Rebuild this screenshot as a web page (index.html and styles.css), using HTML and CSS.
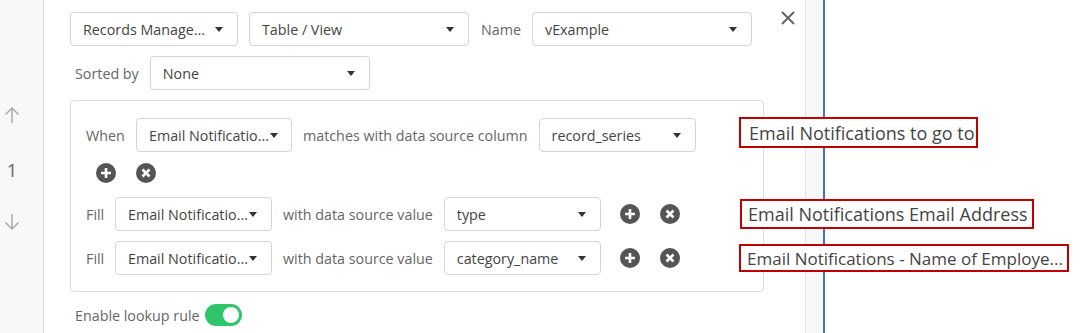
FILE: index.html
```html
<!DOCTYPE html>
<html>
<head>
<meta charset="utf-8">
<link rel="stylesheet" href="styles.css">
</head>
<body>
<div class="page">
  <div class="gutter">
    <svg class="arrow up" width="16" height="18" viewBox="0 0 16 18"><path d="M8 17V2M1.5 8.5L8 2l6.5 6.5" fill="none" stroke="#aaa" stroke-width="1.5"/></svg>
    <div class="index">1</div>
    <svg class="arrow down" width="16" height="18" viewBox="0 0 16 18"><path d="M8 1v15M1.5 9.5L8 16l6.5-6.5" fill="none" stroke="#aaa" stroke-width="1.5"/></svg>
  </div>
  <div class="main">
    <div class="row top">
      <div class="select w168"><span class="val">Records Manage...</span><span class="caret"></span></div>
      <div class="select w220"><span class="val">Table / View</span><span class="caret"></span></div>
      <span class="lbl">Name</span>
      <div class="select w220"><span class="val">vExample</span><span class="caret"></span></div>
      <svg class="close" width="16" height="16" viewBox="0 0 16 16"><path d="M2 2l12 12M14 2L2 14" stroke="#666" stroke-width="2"/></svg>
    </div>
    <div class="row sorted">
      <span class="lbl">Sorted by</span>
      <div class="select w220"><span class="val">None</span><span class="caret"></span></div>
    </div>
    <div class="box">
      <div class="row">
        <span class="lbl lw50">When</span>
        <div class="select w156 tight"><span class="val">Email Notificatio...</span><span class="caret"></span></div>
        <span class="lbl">matches with data source column</span>
        <div class="select w157"><span class="val">record_series</span><span class="caret"></span></div>
      </div>
      <div class="icons">
        <span class="circ"><svg width="20" height="20" viewBox="0 0 20 20"><circle cx="10" cy="10" r="10" fill="#555"/><path d="M10 5v10M5 10h10" stroke="#fff" stroke-width="2.6"/></svg></span>
        <span class="circ"><svg width="20" height="20" viewBox="0 0 20 20"><circle cx="10" cy="10" r="10" fill="#555"/><path d="M6.5 6.5l7 7M13.5 6.5l-7 7" stroke="#fff" stroke-width="2.6"/></svg></span>
      </div>
      <div class="row fill">
        <span class="lbl lw29">Fill</span>
        <div class="select w157 tight"><span class="val">Email Notificatio...</span><span class="caret"></span></div>
        <span class="lbl">with data source value</span>
        <div class="select w157"><span class="val">type</span><span class="caret"></span></div>
        <span class="circ c1"><svg width="20" height="20" viewBox="0 0 20 20"><circle cx="10" cy="10" r="10" fill="#555"/><path d="M10 5v10M5 10h10" stroke="#fff" stroke-width="2.6"/></svg></span>
        <span class="circ c2"><svg width="20" height="20" viewBox="0 0 20 20"><circle cx="10" cy="10" r="10" fill="#555"/><path d="M6.5 6.5l7 7M13.5 6.5l-7 7" stroke="#fff" stroke-width="2.6"/></svg></span>
      </div>
      <div class="row fill2">
        <span class="lbl lw29">Fill</span>
        <div class="select w157 tight"><span class="val">Email Notificatio...</span><span class="caret"></span></div>
        <span class="lbl">with data source value</span>
        <div class="select w157"><span class="val">category_name</span><span class="caret"></span></div>
        <span class="circ c1"><svg width="20" height="20" viewBox="0 0 20 20"><circle cx="10" cy="10" r="10" fill="#555"/><path d="M10 5v10M5 10h10" stroke="#fff" stroke-width="2.6"/></svg></span>
        <span class="circ c2"><svg width="20" height="20" viewBox="0 0 20 20"><circle cx="10" cy="10" r="10" fill="#555"/><path d="M6.5 6.5l7 7M13.5 6.5l-7 7" stroke="#fff" stroke-width="2.6"/></svg></span>
      </div>
    </div>
    <div class="enable">
      <span class="lbl">Enable lookup rule</span>
      <span class="toggle"><span class="knob"></span></span>
    </div>
  </div>
  <div class="strip"></div>
  <div class="blue"></div>
  <div class="rest"></div>

  <div class="note n1">Email Notifications to go to</div>
  <div class="note n2">Email Notifications Email Address</div>
  <div class="note n3">Email Notifications - Name of Employe...</div>
</div>
</body>
</html>
```
FILE: styles.css
```css
* { box-sizing: border-box; }
html, body { margin: 0; padding: 0; background: #fff; }
body { font-family: "Open Sans", "Liberation Sans", sans-serif; font-size: 14.3px; color: #444; }

.page { position: relative; display: flex; height: 333px; overflow: hidden; }

.gutter {
  width: 44px; flex: none; background: #f8f8f8; border-right: 1px solid #dcdcdc;
  display: flex; flex-direction: column; align-items: flex-start; padding-left: 4px;
}
.arrow { display: block; }
.arrow.up { margin-top: 106px; }
.index { margin-top: 34px; font-size: 18.5px; color: #666; line-height: 24px; width: 16px; text-align: center; }
.arrow.down { margin-top: 31px; }

.main { width: 761px; flex: none; padding: 12px 0 0 26px; position: relative; }
.strip { width: 18px; flex: none; background: #f8f8f8; border-left: 1px solid #e2e2e2; }
.blue { width: 2px; flex: none; background: #4472c4; }
.rest { flex: 1; background: #fff; }

.row { display: flex; align-items: center; height: 34px; }
.lbl { color: #666; white-space: nowrap; }
.top { gap: 11px; }
.top .lbl { margin-left: 1px; }
.close { margin-left: 17px; margin-top: -22px; }

.sorted { margin-top: 10px; }
.sorted .lbl { margin-left: 5px; margin-right: 11px; }

.select {
  height: 34px; border: 1px solid #d4d4d4; border-radius: 4px; background: #fff;
  display: flex; align-items: center; padding: 0 14px 0 12px; color: #444; flex: none;
}
.select .val { flex: 1; white-space: nowrap; overflow: hidden; }
.select.tight { padding-right: 12px; }
.select.tight .val { flex: none; }
.caret {
  width: 0; height: 0; border-left: 4px solid transparent; border-right: 4px solid transparent;
  border-top: 5px solid #333; flex: none; margin-left: auto;
}
.select.tight .caret { margin-left: 1px; }
.w168 { width: 168px; }
.w220 { width: 220px; }
.w156 { width: 156px; }
.w157 { width: 157px; }

.box {
  margin-top: 10px; width: 694px; height: 192px; border: 1px solid #dcdcdc; border-radius: 4px;
  padding: 17px 0 0 15px;
}
.lw50 { width: 50px; }
.lw29 { width: 29px; }
.box .row .select + .lbl { margin-left: 11px; margin-right: 11px; }

.icons { display: flex; gap: 20px; padding-left: 10px; margin-top: 11px; height: 20px; }
.circ { display: block; width: 20px; height: 20px; }
.circ svg { display: block; }
.fill { margin-top: 14px; }
.fill2 { margin-top: 10px; }
.c1 { margin-left: 19px; }
.c2 { margin-left: 20px; }

.enable { display: flex; align-items: center; margin-top: 12px; padding-left: 5px; height: 22px; }
.enable .lbl { margin-right: 5px; }
.toggle {
  width: 37px; height: 22px; border-radius: 11px; background: #30c56b; position: relative; display: block;
}
.knob {
  position: absolute; right: 3px; top: 3px; width: 16px; height: 16px; border-radius: 50%; background: #fff;
}

.note {
  position: absolute; border: 2px solid #c00000; background: #fff; color: #444;
  white-space: nowrap; padding: 0 0 0 8px; display: flex; align-items: center;
}
.n1 { left: 739px; top: 117px; width: 239px; height: 31px; font-size: 18px; }
.n2 { left: 740px; top: 199px; width: 294px; height: 30px; font-size: 18px; padding-left: 6px; }
.n3 { left: 739px; top: 244px; width: 330px; height: 28px; font-size: 17px; padding-left: 6px; }
```
